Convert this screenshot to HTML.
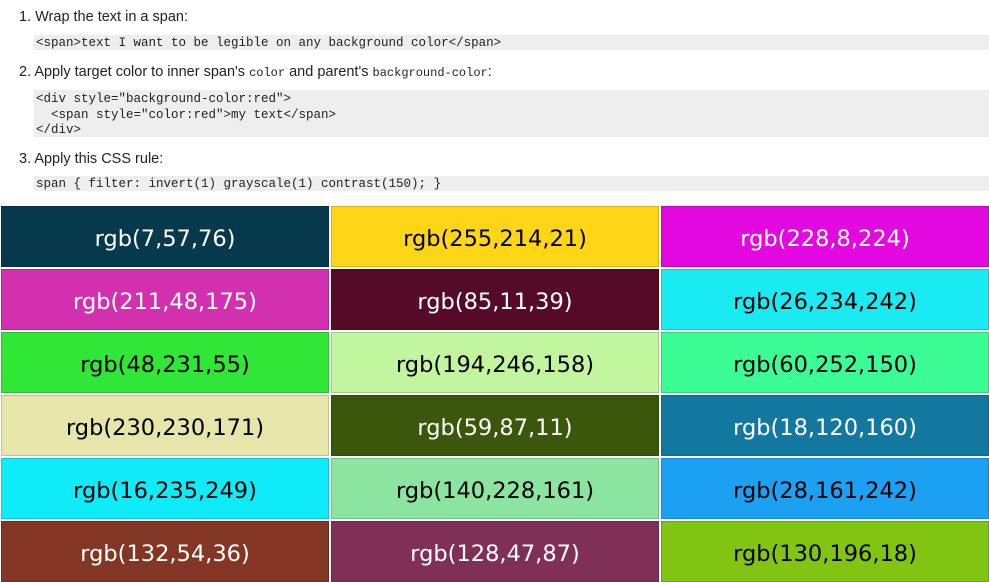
<!DOCTYPE html>
<html><head><meta charset="utf-8"><style>
body{margin:0;width:989px;height:556px;overflow:hidden;background:#fff;font-family:"DejaVu Sans","Liberation Sans",sans-serif;color:#222;position:relative}
.t{position:absolute;left:19px;font-size:14.5px;font-family:"Liberation Sans",sans-serif}
.t code{font-family:"Liberation Mono","DejaVu Sans Mono",monospace;font-size:12px}
pre{position:absolute;left:34px;right:0;margin:0;background:#eee;font-family:"Liberation Mono","DejaVu Sans Mono",monospace;font-size:12.5px;line-height:15.5px;padding:0 2px;color:#222;box-sizing:border-box}
.c{position:absolute;width:326px;height:59px;border:1px solid rgba(0,0,0,.15);font-size:22.5px;line-height:64px;text-align:center;overflow:hidden}
.w{color:#fff}.b{color:#000}
</style></head><body>
<div class="t" style="top:9px">1. Wrap the text in a span:</div>
<pre style="top:35px;height:15px;line-height:16px">&lt;span&gt;text I want to be legible on any background color&lt;/span&gt;</pre>
<div class="t" style="top:64px">2. Apply target color to inner span's <code>color</code> and parent's <code>background-color</code>:</div>
<pre style="top:90px;height:47px;padding-top:2px">&lt;div style="background-color:red"&gt;
  &lt;span style="color:red"&gt;my text&lt;/span&gt;
&lt;/div&gt;</pre>
<div class="t" style="top:151px">3. Apply this CSS rule:</div>
<pre style="top:176px;height:15px;line-height:16px">span { filter: invert(1) grayscale(1) contrast(150); }</pre>

<div class="c w" style="left:1px;top:206px;background:rgb(7,57,76)">rgb(7,57,76)</div>
<div class="c b" style="left:331px;top:206px;background:rgb(255,214,21)">rgb(255,214,21)</div>
<div class="c w" style="left:661px;top:206px;background:rgb(228,8,224)">rgb(228,8,224)</div>

<div class="c w" style="left:1px;top:269px;background:rgb(211,48,175)">rgb(211,48,175)</div>
<div class="c w" style="left:331px;top:269px;background:rgb(85,11,39)">rgb(85,11,39)</div>
<div class="c b" style="left:661px;top:269px;background:rgb(26,234,242)">rgb(26,234,242)</div>

<div class="c b" style="left:1px;top:332px;background:rgb(48,231,55)">rgb(48,231,55)</div>
<div class="c b" style="left:331px;top:332px;background:rgb(194,246,158)">rgb(194,246,158)</div>
<div class="c b" style="left:661px;top:332px;background:rgb(60,252,150)">rgb(60,252,150)</div>

<div class="c b" style="left:1px;top:395px;background:rgb(230,230,171)">rgb(230,230,171)</div>
<div class="c w" style="left:331px;top:395px;background:rgb(59,87,11)">rgb(59,87,11)</div>
<div class="c w" style="left:661px;top:395px;background:rgb(18,120,160)">rgb(18,120,160)</div>

<div class="c b" style="left:1px;top:458px;background:rgb(16,235,249)">rgb(16,235,249)</div>
<div class="c b" style="left:331px;top:458px;background:rgb(140,228,161)">rgb(140,228,161)</div>
<div class="c b" style="left:661px;top:458px;background:rgb(28,161,242)">rgb(28,161,242)</div>

<div class="c w" style="left:1px;top:521px;background:rgb(132,54,36)">rgb(132,54,36)</div>
<div class="c w" style="left:331px;top:521px;background:rgb(128,47,87)">rgb(128,47,87)</div>
<div class="c b" style="left:661px;top:521px;background:rgb(130,196,18)">rgb(130,196,18)</div>
</body></html>
